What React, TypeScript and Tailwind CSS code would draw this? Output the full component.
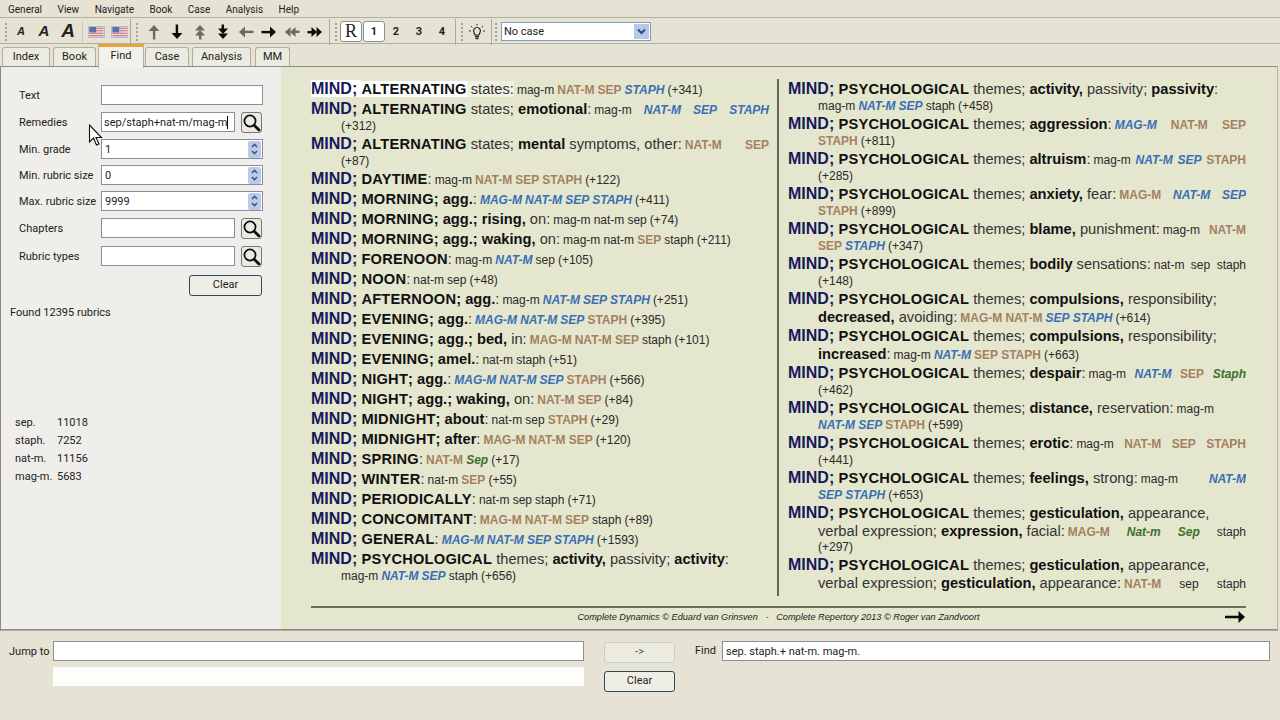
import React from "react";

const left: [string, string][] = [
  ["*ALTERNATING* states:", "mag-m NAT-M SEP STAPH/ (+341)"],
  ["*ALTERNATING* states; *emotional*:", "mag-m NAT-M/ SEP/ STAPH/ (+312)"],
  ["*ALTERNATING* states; *mental* symptoms, other:", "NAT-M SEP (+87)"],
  ["*DAYTIME*:", "mag-m NAT-M SEP STAPH (+122)"],
  ["*MORNING; agg.*:", "MAG-M/ NAT-M/ SEP/ STAPH/ (+411)"],
  ["*MORNING; agg.; rising,* on:", "mag-m nat-m sep (+74)"],
  ["*MORNING; agg.; waking,* on:", "mag-m nat-m SEP staph (+211)"],
  ["*FORENOON*:", "mag-m NAT-M/ sep (+105)"],
  ["*NOON*:", "nat-m sep (+48)"],
  ["*AFTERNOON; agg.*:", "mag-m NAT-M/ SEP/ STAPH/ (+251)"],
  ["*EVENING; agg.*:", "MAG-M/ NAT-M/ SEP/ STAPH (+395)"],
  ["*EVENING; agg.; bed,* in:", "MAG-M NAT-M SEP staph (+101)"],
  ["*EVENING; amel.*:", "nat-m staph (+51)"],
  ["*NIGHT; agg.*:", "MAG-M/ NAT-M/ SEP/ STAPH (+566)"],
  ["*NIGHT; agg.; waking,* on:", "NAT-M SEP (+84)"],
  ["*MIDNIGHT; about*:", "nat-m sep STAPH (+29)"],
  ["*MIDNIGHT; after*:", "MAG-M NAT-M SEP (+120)"],
  ["*SPRING*:", "NAT-M Sep~ (+17)"],
  ["*WINTER*:", "nat-m SEP (+55)"],
  ["*PERIODICALLY*:", "nat-m sep staph (+71)"],
  ["*CONCOMITANT*:", "MAG-M NAT-M SEP staph (+89)"],
  ["*GENERAL*:", "MAG-M/ NAT-M/ SEP/ STAPH/ (+1593)"],
  ["*PSYCHOLOGICAL* themes; *activity,* passivity; *activity*:", "^ mag-m NAT-M/ SEP/ staph (+656)"],
];

const P = "*PSYCHOLOGICAL* themes; ";
const right: [string, string][] = [
  [P + "*activity,* passivity; *passivity*:", "^ mag-m NAT-M/ SEP/ staph (+458)"],
  [P + "*aggression*:", "MAG-M/ NAT-M SEP STAPH (+811)"],
  [P + "*altruism*:", "mag-m NAT-M/ SEP/ STAPH (+285)"],
  [P + "*anxiety,* fear:", "MAG-M NAT-M/ SEP/ STAPH (+899)"],
  [P + "*blame,* punishment:", "mag-m NAT-M SEP STAPH/ (+347)"],
  [P + "*bodily* sensations:", "nat-m sep staph (+148)"],
  [P + "*compulsions,* responsibility;|*decreased,* avoiding:", "MAG-M NAT-M SEP/ STAPH/ (+614)"],
  [P + "*compulsions,* responsibility;|*increased*:", "mag-m NAT-M/ SEP STAPH (+663)"],
  [P + "*despair*:", "mag-m NAT-M/ SEP Staph~ (+462)"],
  [P + "*distance,* reservation:", "mag-m NAT-M/ SEP/ STAPH (+599)"],
  [P + "*erotic*:", "mag-m NAT-M SEP STAPH (+441)"],
  [P + "*feelings,* strong:", "mag-m NAT-M/ SEP/_STAPH/ (+653)"],
  [P + "*gesticulation,* appearance,|verbal expression; *expression,* facial:", "MAG-M Nat-m~ Sep~ staph (+297)#"],
  [P + "*gesticulation,* appearance,|verbal expression; *gesticulation,* appearance:", "NAT-M sep staph #"],
];

function Remedy({ t }: { t: string }) {
  if (t.endsWith("#")) return <span className="inline-block w-[200px] indent-0 text-[12px] leading-[15px] text-[#2a2a2a]">{t.slice(0, -1)}</span>;
  if (t.endsWith("/")) return <span className="whitespace-nowrap text-[12px] leading-[15px] font-bold italic text-[#3a6fb4]">{t.slice(0, -1)}</span>;
  if (t.endsWith("~")) return <span className="whitespace-nowrap text-[12px] leading-[15px] font-bold italic text-[#40702c]">{t.slice(0, -1)}</span>;
  if (t === t.toUpperCase() && !t.startsWith("(")) return <span className="whitespace-nowrap text-[12px] leading-[15px] font-bold text-[#a5805f]">{t}</span>;
  return <span className="whitespace-nowrap text-[12px] leading-[15px] text-[#2a2a2a]">{t}</span>;
}

function HeadParts({ text, first, tight }: { text: string; first?: boolean; tight?: boolean }) {
  return (
    <>
      {text.split("*").map((s, i) =>
        s === "" ? null : i % 2 === 1 ? (
          <span key={i} className={`text-[14.67px] font-bold text-[#111] ${tight ? "leading-[17px]" : "leading-[18px]"} ${first ? "bg-white" : ""}`}>
            {s.split(/([A-Z]{3,})/).map((w, j) =>
              j % 2 === 1 ? (
                <span key={j} className="tracking-[0.22px]">{w}</span>
              ) : (
                <React.Fragment key={j}>{w}</React.Fragment>
              )
            )}
          </span>
        ) : (
          <span key={i} className={`text-[14.67px] text-[#333] ${tight ? "leading-[17px]" : "leading-[18px]"} ${first ? "bg-[#f1f1e6]" : ""}`}>{s}</span>
        )
      )}
    </>
  );
}

function Rubric({ head, rem, first }: { head: string; rem: string; first?: boolean }) {
  const groups = head.split("|");
  const lastPad = "inline-block indent-0 whitespace-pre pr-[3px]";
  return (
    <p className="pl-[30px] -indent-[30px] text-justify leading-[15px]">
      <span className={groups[1] ? "inline-block indent-0 whitespace-pre" : lastPad}>
        <span className={`text-[16px] leading-[20px] font-bold text-[#17175c] ${first ? "bg-white" : ""}`}>MIND;</span>
        <span className={`text-[15px] leading-[18px] ${first ? "bg-white" : ""}`}> </span>
        <HeadParts text={groups[0]} first={first} />
      </span>
      {groups[1] ? " " : null}
      {groups[1] ? (
        <span className={lastPad}>
          <HeadParts text={groups[1]} tight />
        </span>
      ) : null}
      {rem.split(" ").map((t, i) =>
        t === "^" ? (
          <br key={i} />
        ) : t.includes("_") ? (
          <React.Fragment key={i}>
            <span className="whitespace-nowrap">
              {t.split("_").map((u, j) => (
                <React.Fragment key={j}>
                  {j > 0 ? <span className="text-[12px]"> </span> : null}
                  <Remedy t={u} />
                </React.Fragment>
              ))}
            </span>{" "}
          </React.Fragment>
        ) : (
          <React.Fragment key={i}>
            <Remedy t={t} />{" "}
          </React.Fragment>
        )
      )}
    </p>
  );
}

function Arrow({ dir, double, dim }: { dir: "u" | "d" | "l" | "r"; double?: boolean; dim?: boolean }) {
  const rot = { u: 0, d: 180, l: 270, r: 90 }[dir];
  const c = dim ? "#6b6b60" : "#0c0c0c";
  return (
    <svg width="16" height="16" viewBox="0 0 16 16" style={{ transform: `rotate(${rot}deg)` }}>
      {double ? (
        <g fill={c}>
          <path d="M8 1L13 6.5H3Z" />
          <path d="M8 6L13 11.5H3Z" />
          <rect x="7" y="10" width="2.4" height="5.5" />
        </g>
      ) : (
        <g fill={c}>
          <path d="M8 1L13.5 7H2.5Z" />
          <rect x="6.9" y="6" width="2.4" height="9.5" />
        </g>
      )}
    </svg>
  );
}

function Flag() {
  return (
    <svg width="17" height="12" viewBox="0 0 17 12" className="border border-[#b9b9c9]">
      <rect width="17" height="12" fill="#e9dfe0" />
      <path d="M0 1.5H17M0 4.5H17M0 7.5H17M0 10.5H17" stroke="#c8666c" strokeWidth="1.4" />
      <rect width="8" height="6.5" fill="#5a6fa8" />
    </svg>
  );
}

function Dots() {
  return <div className="h-[18px] w-0 border-l-2 border-dotted border-[#a5a294]" />;
}

function Sep({ cls }: { cls: string }) {
  return <div className={`h-[26px] w-px bg-[#aaa89a] ${cls}`} />;
}

function SearchBtn() {
  return (
    <button className="w-[21px] h-[21px] ml-[6px] shrink-0 rounded-[3px] border border-[#777] bg-[#ebeae2] flex items-center justify-center">
      <svg width="19" height="19" viewBox="0 0 19 19" fill="none" stroke="#0a0a0a">
        <circle cx="8" cy="8" r="5.6" strokeWidth="1.7" />
        <path d="M12.2 12.2L17 17" strokeWidth="2.8" strokeLinecap="round" />
      </svg>
    </button>
  );
}

function Spin({ label, value, cls }: { label: string; value: string; cls: string }) {
  return (
    <Row label={label} cls={cls}>
      <div className="w-[162px] h-[20px] border border-[#8a8f96] bg-white flex items-center justify-between pl-[3px] pr-[1px]">
        <span className="pt-[2px]">{value}</span>
        <span className="w-[13px] h-[17px] rounded-[2px] bg-[#bccaea] flex flex-col items-center justify-center gap-[2px]">
          <svg width="7" height="5" viewBox="0 0 7 5"><path d="M1 4L3.5 1.2L6 4" fill="none" stroke="#33507f" strokeWidth="1.4" /></svg>
          <svg width="7" height="5" viewBox="0 0 7 5"><path d="M1 1L3.5 3.8L6 1" fill="none" stroke="#33507f" strokeWidth="1.4" /></svg>
        </span>
      </div>
    </Row>
  );
}

function Row({ label, cls, children }: { label: string; cls: string; children: React.ReactNode }) {
  return (
    <div className={`flex items-center h-[20px] ${cls}`}>
      <span className="w-[82px] shrink-0 whitespace-nowrap pt-[2px]">{label}</span>
      {children}
    </div>
  );
}

const tabs = [
  ["Index", "w-[48px]", "mr-[3px]"],
  ["Book", "w-[43px]", "mr-[2px]"],
  ["Case", "w-[44px]", "mr-[3px]"],
  ["Analysis", "w-[59px]", "mr-[4px]"],
  ["MM", "w-[35px]", ""],
];

function Tab({ t }: { t: string[] }) {
  return (
    <div className={`${t[1]} ${t[2]} h-[19px] border border-b-0 border-[#b0ae9f] rounded-t-[3px] bg-[#ecebe1] flex items-center justify-center`}>
      {t[0]}
    </div>
  );
}

export default function App() {
  return (
    <div className="relative w-[1280px] h-[720px] overflow-hidden bg-[#e6e3d4] text-[11px] text-[#222] font-['Roboto',sans-serif]">
      {/* menu */}
      <div className="h-[18px] flex items-center gap-[15.5px] pl-[8px] pt-px text-[10px] border-b border-[#b2b0a2]">
        {["General", "View", "Navigate", "Book", "Case", "Analysis", "Help"].map((m) => (
          <span key={m}>{m}</span>
        ))}
      </div>
      {/* toolbar */}
      <div className="h-[26px] flex items-center border-b border-[#b2b0a2] pl-[5px] pt-[2px]">
        <Dots />
        <span className="ml-[7px] w-[14px] text-center text-[11px] font-bold italic font-['Liberation_Sans',sans-serif]">A</span>
        <span className="ml-[8px] w-[16px] text-center text-[15px] font-bold italic font-['Liberation_Sans',sans-serif]">A</span>
        <span className="ml-[7px] w-[18px] text-center text-[19px] font-bold italic font-['Liberation_Sans',sans-serif]">A</span>
        <div className="ml-[5px] mr-[5px] h-[20px] w-px bg-[#c8c6b8]" />
        <Flag />
        <div className="w-[6px]" />
        <Flag />
        <Sep cls="ml-[2px]" />
        <div className="ml-[5px]"><Dots /></div>
        <div className="ml-[8px] flex items-center gap-[7px]">
          <Arrow dir="u" dim />
          <Arrow dir="d" />
          <Arrow dir="u" double dim />
          <Arrow dir="d" double />
          <Arrow dir="l" dim />
          <Arrow dir="r" />
          <Arrow dir="l" double dim />
          <Arrow dir="r" double />
        </div>
        <Sep cls="ml-[6px]" />
        <div className="ml-[5px]"><Dots /></div>
        <div className="ml-[3px] w-[22px] h-[21px] rounded-[3px] border border-[#8f8f8f] bg-white flex items-center justify-center text-[18px] font-['Liberation_Serif',serif]">R</div>
        <div className="ml-px w-[22px] h-[21px] rounded-[3px] border border-[#8f8f8f] bg-white flex items-center justify-center font-bold pt-px">1</div>
        {["2", "3", "4"].map((n) => (
          <div key={n} className="ml-px w-[22px] -translate-x-px text-center font-bold pt-[2px]">{n}</div>
        ))}
        <Sep cls="ml-[1px]" />
        <div className="ml-[5px]"><Dots /></div>
        <svg className="ml-[5px]" width="18" height="18" viewBox="0 0 18 18" fill="none" stroke="#222">
          <path d="M6 9.5a3.4 3.4 0 1 1 6 0L11 12H7Z" strokeWidth="1.2" fill="#e9e6c8" />
          <path d="M7 13.5H11M7.5 15.5H10.5" strokeWidth="1.6" />
          <path d="M9 1V2.5M3 3L4.3 4.3M15 3L13.7 4.3M1 8H2.8M17 8H15.2" strokeWidth="1" />
        </svg>
        <Sep cls="ml-[5px]" />
        <div className="ml-[3px]"><Dots /></div>
        <div className="ml-[4px] w-[150px] h-[19px] border border-[#7f9db9] bg-white flex items-center justify-between pl-[2px] pr-[1px] text-[11px]">
          <span className="pt-[2px]">No case</span>
          <span className="w-[15px] h-[15px] bg-[#b9c7ea] flex items-center justify-center">
            <svg width="9" height="7" viewBox="0 0 9 7"><path d="M1 1.5L4.5 5L8 1.5" fill="none" stroke="#2d4a7c" strokeWidth="2" /></svg>
          </span>
        </div>
      </div>
      {/* tabs */}
      <div className="h-[22px] flex items-end pl-[2px]">
        <Tab t={tabs[0]} />
        <Tab t={tabs[1]} />
        <div className="relative z-10 -mb-[2px] mr-px w-[46px] h-[24px] border-x border-[#b0ae9f] border-t-[3px] border-t-[#e8a33a] bg-[#f2f1ec] flex items-start justify-center pt-[1px]">
          Find
        </div>
        <Tab t={tabs[2]} />
        <Tab t={tabs[3]} />
        <Tab t={tabs[4]} />
      </div>
      {/* main panel */}
      <div className="w-[1278px] h-[564px] flex border border-[#8c8c84] border-r-[#b5b5aa] shadow-[0_1px_0_#aaa]">
        <div className="w-[280px] shrink-0 bg-[#efeeea] pl-[18px]">
          <Row label="Text" cls="mt-[18px]">
            <div className="w-[162px] h-[20px] border border-[#8a8f96] bg-white" />
          </Row>
          <Row label="Remedies" cls="mt-[7px]">
            <div className="w-[134px] h-[20px] border border-[#8a8f96] bg-white flex items-center pl-[2px] whitespace-nowrap text-[11px]">
              <span className="pt-[2px]">sep/staph+nat-m/mag-m</span><span className="w-px h-[13px] bg-black" />
            </div>
            <SearchBtn />
          </Row>
          <Spin label="Min. grade" value="1" cls="mt-[7px]" />
          <Spin label="Min. rubric size" value="0" cls="mt-[6px]" />
          <Spin label="Max. rubric size" value="9999" cls="mt-[6px]" />
          <Row label="Chapters" cls="mt-[7px]">
            <div className="w-[134px] h-[20px] border border-[#8a8f96] bg-white" />
            <SearchBtn />
          </Row>
          <Row label="Rubric types" cls="mt-[8px]">
            <div className="w-[134px] h-[20px] border border-[#8a8f96] bg-white" />
            <SearchBtn />
          </Row>
          <div className="mt-[9px] ml-[170px] w-[73px] h-[21px] rounded-[3px] border border-[#2f4a55] bg-[#efeee6] flex items-center justify-center">Clear</div>
          <div className="mt-[9px] -ml-[9px] h-[16px] leading-[16px]">Found 12395 rubrics</div>
          <div className="mt-[93px] -ml-[4px] flex flex-col">
            {[["sep.", "11018"], ["staph.", "7252"], ["nat-m.", "11156"], ["mag-m.", "5683"]].map(([a, b]) => (
              <div key={a} className="flex h-[18px] items-center">
                <span className="w-[42px]">{a}</span>
                <span>{b}</span>
              </div>
            ))}
          </div>
        </div>
        <div className="flex-1 bg-[#e4e6ce] flex flex-col pl-[30px] pt-[12px] font-['Liberation_Sans',sans-serif]">
          <div className="flex h-[518px]">
            <div className="w-[458px] shrink-0">
              {left.map((r, i) => (
                <Rubric key={i} head={r[0]} rem={r[1]} first={i === 0} />
              ))}
            </div>
            <div className="ml-[8px] mr-[9px] w-[2px] h-[517px] bg-[#66665a]" />
            <div className="w-[458px] shrink-0 h-[513px] overflow-hidden">
              {right.map((r, i) => (
                <Rubric key={i} head={r[0]} rem={r[1]} />
              ))}
            </div>
          </div>
          <div className="w-[935px] h-[2px] mt-[9px] bg-[#6e6f58]" />
          <div className="w-[935px] flex items-center h-[18px] relative">
            <div className="flex-1 text-center text-[9.2px] italic whitespace-pre pl-[22px] pt-[1px]">
              {"Complete Dynamics © Eduard van Grinsven   -   Complete Repertory 2013 © Roger van Zandvoort"}
            </div>
            <svg width="22" height="16" viewBox="0 0 22 16" className="shrink-0">
              <path d="M1 6.8H14.5V2L21 8L14.5 14V9.2H1Z" fill="#0a0a0a" />
            </svg>
          </div>
        </div>
      </div>
      {/* bottom */}
      <div className="flex pt-[11px] pl-[9px]">
        <span className="w-[44px] h-[20px] leading-[20px] pt-px">Jump to</span>
        <div className="w-[531px] shrink-0">
          <div className="h-[20px] border border-[#8a8f96] bg-white" />
          <div className="h-[19px] mt-[6px] bg-[#fdfdf9]" />
        </div>
        <div className="ml-[20px] w-[71px] shrink-0">
          <div className="mt-px h-[21px] rounded-[3px] border border-[#cfcdbf] bg-[#ecebe0] flex items-center justify-center text-[#555]">-&gt;</div>
          <div className="mt-[8px] h-[21px] rounded-[3px] border border-[#2f4a55] bg-[#efeee6] flex items-center justify-center">Clear</div>
        </div>
        <span className="ml-[20px] w-[27px] h-[20px] leading-[20px]">Find</span>
        <div className="w-[548px] h-[20px] border border-[#8a8f96] bg-white flex items-center pl-[3px] pt-[2px]">sep. staph.+ nat-m. mag-m.</div>
      </div>
      {/* cursor */}
      <svg className="absolute left-[88px] top-[124px]" width="16" height="24" viewBox="0 0 16 24">
        <path d="M1.5 1V18L5.5 14L8.5 21L11 20L8 13.5H13.5Z" fill="#fff" stroke="#111" strokeWidth="1.1" />
      </svg>
    </div>
  );
}
